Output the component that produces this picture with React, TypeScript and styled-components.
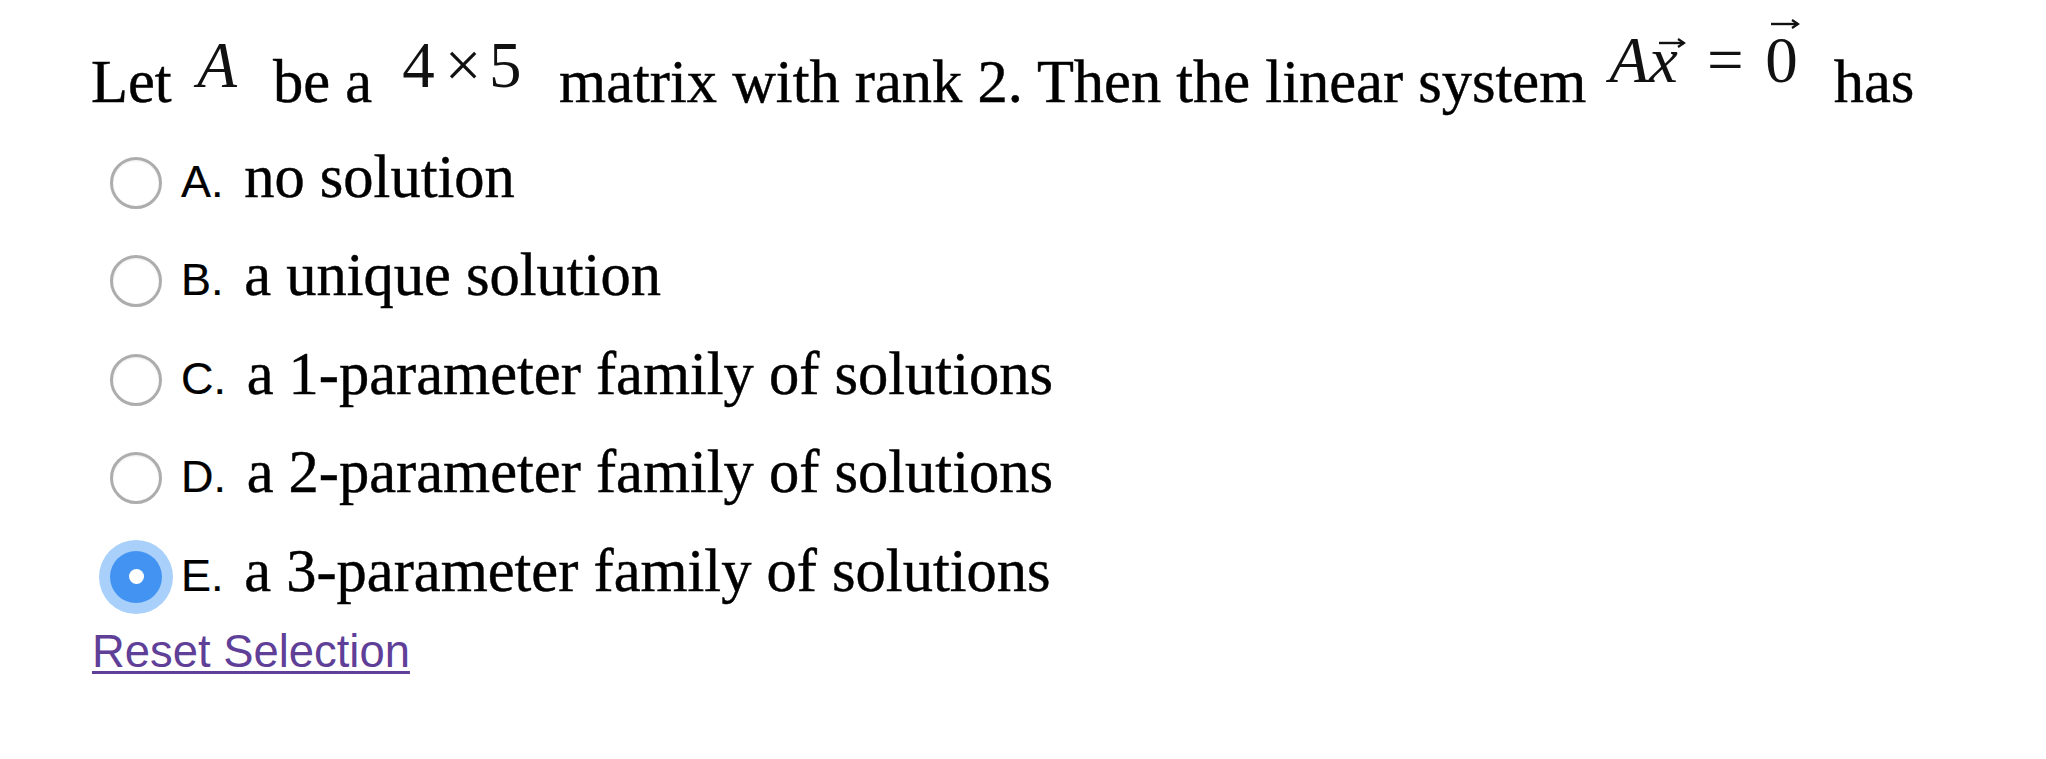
import React from "react";
import styled, { createGlobalStyle } from "styled-components";

const GlobalStyle = createGlobalStyle`
  html, body {
    margin: 0;
    padding: 0;
    background: #ffffff;
  }
`;

const Page = styled.div`
  padding: 47px 0 0 91px;
  font-family: "Liberation Serif", "Times New Roman", serif;
  color: #000;
`;

const Question = styled.div`
  font-size: 60.5px;
  line-height: 70px;
  white-space: nowrap;
  margin-bottom: 10.5px;
  -webkit-text-stroke: 0.45px #000;
`;

const MathRun = styled.span<{ $lift: number; $mr?: number }>`
  font-family: "Liberation Serif", "Times New Roman", serif;
  font-size: 65px;
  line-height: 0;
  vertical-align: ${(p) => p.$lift}px;
  margin-right: ${(p) => p.$mr ?? 0}px;
  white-space: nowrap;
  color: #111;
  -webkit-text-stroke: 0;
`;

const Sym = styled.span<{ $italic?: boolean; $ml?: number }>`
  position: relative;
  font-style: ${(p) => (p.$italic ? "italic" : "normal")};
  margin-left: ${(p) => p.$ml ?? 0}px;
`;

const Arrow = styled.svg<{ $left: number; $top: number }>`
  position: absolute;
  left: ${(p) => p.$left}px;
  top: ${(p) => p.$top}px;
  overflow: visible;
`;

const VecArrow = ({ left, top, width }: { left: number; top: number; width: number }) => (
  <Arrow $left={left} $top={top} width={width} height={10} viewBox={`0 0 ${width} 10`}>
    <path d={`M1 5 H${width - 1}`} stroke="#111" strokeWidth={2.4} fill="none" />
    <path
      d={`M${width - 7} 1 L${width - 1} 5 L${width - 7} 9`}
      stroke="#111"
      strokeWidth={2.2}
      fill="none"
      strokeLinejoin="miter"
    />
  </Arrow>
);

const OptionRow = styled.label`
  display: block;
  font-size: 60.5px;
  line-height: 98.5px;
  white-space: nowrap;
  cursor: pointer;
  -webkit-text-stroke: 0.45px #000;
`;

const Radio = styled.span<{ $checked?: boolean }>`
  display: inline-flex;
  align-items: center;
  justify-content: center;
  box-sizing: border-box;
  width: 52px;
  height: 52px;
  border-radius: 50%;
  vertical-align: middle;
  margin-left: 19px;
  margin-right: 19px;
  border: ${(p) => (p.$checked ? "none" : "3.5px solid #adadad")};
  background: ${(p) => (p.$checked ? "#4394f2" : "#ffffff")};
  box-shadow: ${(p) => (p.$checked ? "0 0 0 11px #a9d0fa" : "inset 0 1px 2px rgba(0,0,0,0.08)")};
`;

const Dot = styled.span`
  width: 15px;
  height: 15px;
  border-radius: 50%;
  background: #ffffff;
`;

const Letter = styled.span`
  font-family: "Liberation Sans", Arial, sans-serif;
  font-size: 45px;
  line-height: 1;
  margin-right: 5.5px;
  -webkit-text-stroke: 0.2px #000;
`;

const ResetRow = styled.div`
  margin-top: 3.5px;
  font-family: "Liberation Sans", Arial, sans-serif;
  font-size: 45.4px;
  line-height: 56px;
  padding-left: 1px;
`;

const ResetLink = styled.a`
  color: #603f98;
  text-decoration: underline;
  text-decoration-thickness: 3px;
  text-underline-offset: 4px;
  cursor: pointer;
`;

const options = [
  { letter: "A.", text: "no solution" },
  { letter: "B.", text: "a unique solution" },
  { letter: "C.", text: "a 1-parameter family of solutions" },
  { letter: "D.", text: "a 2-parameter family of solutions" },
  { letter: "E.", text: "a 3-parameter family of solutions" },
];

export default function App() {
  const selected = 4;
  return (
    <>
      <GlobalStyle />
      <Page>
        <Question>
          Let{" "}
          <MathRun $lift={15} $mr={21}>
            <Sym $italic $ml={10.5}>A</Sym>
          </MathRun>{" "}
          be a{" "}
          <MathRun $lift={15} $mr={22.5}>
            <Sym $ml={15}>4</Sym>
            <Sym $ml={10}>×</Sym>
            <Sym $ml={7.5}>5</Sym>
          </MathRun>{" "}
          matrix with rank 2. Then the linear system{" "}
          <MathRun $lift={20} $mr={21}>
            <Sym $italic $ml={8}>A</Sym>
            <Sym $italic>
              x
              <VecArrow left={9} top={14} width={27} />
            </Sym>
            <Sym $ml={29}>=</Sym>
            <Sym $ml={21.5}>
              0
              <VecArrow left={5} top={-5} width={29} />
            </Sym>
          </MathRun>{" "}
          has
        </Question>
        {options.map((o, i) => (
          <OptionRow key={o.letter}>
            <Radio $checked={i === selected}>{i === selected && <Dot />}</Radio>
            <Letter>{o.letter}</Letter> {o.text}
          </OptionRow>
        ))}
        <ResetRow>
          <ResetLink>Reset Selection</ResetLink>
        </ResetRow>
      </Page>
    </>
  );
}
